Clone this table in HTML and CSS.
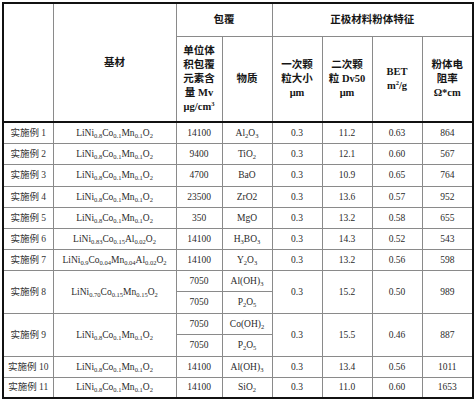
FILE: index.html
```html
<!DOCTYPE html>
<html>
<head>
<meta charset="utf-8">
<link rel="stylesheet" href="styles.css">
</head>
<body>
<table class="tbl">
  <colgroup>
    <col class="c1"><col class="c2"><col class="c3"><col class="c4">
    <col class="c5"><col class="c6"><col class="c7"><col class="c8">
  </colgroup>
  <thead>
    <tr class="h1">
      <th rowspan="2"></th>
      <th rowspan="2" class="hb">基材</th>
      <th colspan="2">包覆</th>
      <th colspan="4">正极材料粉体特征</th>
    </tr>
    <tr class="h2">
      <th>单位体<br>积包覆<br>元素含<br>量 Mv<br>μg/cm<sup>3</sup></th>
      <th>物质</th>
      <th>一次颗<br>粒大小<br>μm</th>
      <th>二次颗<br>粒 Dv50<br>μm</th>
      <th>BET<br>m<sup>2</sup>/g</th>
      <th>粉体电<br>阻率<br>Ω*cm</th>
    </tr>
  </thead>
  <tbody>
    <tr class="r21"><td class="ex">实施例 1</td><td>LiNi<sub>0.8</sub>Co<sub>0.1</sub>Mn<sub>0.1</sub>O<sub>2</sub></td><td>14100</td><td>Al<sub>2</sub>O<sub>3</sub></td><td>0.3</td><td>11.2</td><td>0.63</td><td>864</td></tr>
    <tr class="r21"><td class="ex">实施例 2</td><td>LiNi<sub>0.8</sub>Co<sub>0.1</sub>Mn<sub>0.1</sub>O<sub>2</sub></td><td>9400</td><td>TiO<sub>2</sub></td><td>0.3</td><td>12.1</td><td>0.60</td><td>567</td></tr>
    <tr class="r22"><td class="ex">实施例 3</td><td>LiNi<sub>0.8</sub>Co<sub>0.1</sub>Mn<sub>0.1</sub>O<sub>2</sub></td><td>4700</td><td>BaO</td><td>0.3</td><td>10.9</td><td>0.65</td><td>764</td></tr>
    <tr class="r21"><td class="ex">实施例 4</td><td>LiNi<sub>0.8</sub>Co<sub>0.1</sub>Mn<sub>0.1</sub>O<sub>2</sub></td><td>23500</td><td>ZrO2</td><td>0.3</td><td>13.6</td><td>0.57</td><td>952</td></tr>
    <tr class="r21"><td class="ex">实施例 5</td><td>LiNi<sub>0.8</sub>Co<sub>0.1</sub>Mn<sub>0.1</sub>O<sub>2</sub></td><td>350</td><td>MgO</td><td>0.3</td><td>13.2</td><td>0.58</td><td>655</td></tr>
    <tr class="r21"><td class="ex">实施例 6</td><td>LiNi<sub>0.83</sub>Co<sub>0.15</sub>Al<sub>0.02</sub>O<sub>2</sub></td><td>14100</td><td>H<sub>3</sub>BO<sub>3</sub></td><td>0.3</td><td>14.3</td><td>0.52</td><td>543</td></tr>
    <tr class="r21"><td class="ex">实施例 7</td><td>LiNi<sub>0.9</sub>Co<sub>0.04</sub>Mn<sub>0.04</sub>Al<sub>0.02</sub>O<sub>2</sub></td><td>14100</td><td>Y<sub>2</sub>O<sub>3</sub></td><td>0.3</td><td>13.2</td><td>0.56</td><td>598</td></tr>
    <tr class="r21"><td class="ex" rowspan="2">实施例 8</td><td rowspan="2">LiNi<sub>0.70</sub>Co<sub>0.15</sub>Mn<sub>0.15</sub>O<sub>2</sub></td><td>7050</td><td>Al(OH)<sub>3</sub></td><td rowspan="2">0.3</td><td rowspan="2">15.2</td><td rowspan="2">0.50</td><td rowspan="2">989</td></tr>
    <tr class="r22"><td>7050</td><td>P<sub>2</sub>O<sub>5</sub></td></tr>
    <tr class="r21"><td class="ex" rowspan="2">实施例 9</td><td rowspan="2">LiNi<sub>0.8</sub>Co<sub>0.1</sub>Mn<sub>0.1</sub>O<sub>2</sub></td><td>7050</td><td>Co(OH)<sub>2</sub></td><td rowspan="2">0.3</td><td rowspan="2">15.5</td><td rowspan="2">0.46</td><td rowspan="2">887</td></tr>
    <tr class="r22"><td>7050</td><td>P<sub>2</sub>O<sub>5</sub></td></tr>
    <tr class="r21"><td class="ex">实施例 10</td><td>LiNi<sub>0.8</sub>Co<sub>0.1</sub>Mn<sub>0.1</sub>O<sub>2</sub></td><td>14100</td><td>Al(OH)<sub>3</sub></td><td>0.3</td><td>13.4</td><td>0.56</td><td>1011</td></tr>
    <tr class="r21"><td class="ex">实施例 11</td><td>LiNi<sub>0.8</sub>Co<sub>0.1</sub>Mn<sub>0.1</sub>O<sub>2</sub></td><td>14100</td><td>SiO<sub>2</sub></td><td>0.3</td><td>11.0</td><td>0.60</td><td>1653</td></tr>
  </tbody>
</table>
</body>
</html>
```
FILE: styles.css
```css
html, body {
  margin: 0;
  padding: 0;
  background: #fff;
}
body {
  padding: 2px 0 0 2px;
  font-family: "Liberation Serif", "Noto Sans CJK SC", serif;
  color: #2a2a2a;
}
.tbl {
  border-collapse: collapse;
  table-layout: fixed;
  width: 470px;
  border: 2px solid #111;
}
.c1 { width: 50px; }
.c2 { width: 123px; }
.c3 { width: 46px; }
.c4 { width: 50px; }
.c5 { width: 50px; }
.c6 { width: 50px; }
.c7 { width: 50px; }
.c8 { width: 51px; }

th, td {
  border: 1px solid #8a8a8a;
  padding: 0;
  text-align: center;
  vertical-align: middle;
  overflow: hidden;
  white-space: nowrap;
}
th {
  font-family: "Liberation Serif", "Noto Sans CJK SC", serif;
  font-weight: bold;
  font-size: 10.5px;
  line-height: 14px;
  color: #151515;
}
.h1 { height: 33px; }
.h2 { height: 86px; }
thead tr.h2 th { border-bottom: 2px solid #111; }
thead tr.h1 th[rowspan] { border-bottom: 2px solid #111; }

td {
  font-size: 9.5px;
  line-height: 12px;
}
.ex {
  font-family: "Liberation Serif", "Noto Sans CJK SC", serif;
  color: #333;
}
.r21 { height: 21px; }
.r22 { height: 22px; }
sub {
  font-size: 6.5px;
  vertical-align: -2px;
  line-height: 0;
}
sup {
  font-size: 6.5px;
  vertical-align: 4px;
  line-height: 0;
}
```
